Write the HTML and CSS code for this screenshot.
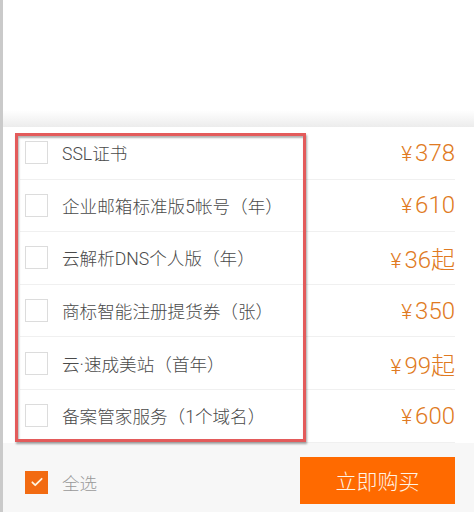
FILE: index.html
```html
<!DOCTYPE html>
<html lang="zh-CN">
<head>
    <meta charset="UTF-8">
    <meta name="viewport" content="width=device-width, initial-scale=1.0">
    <title>增值服务</title>
    <link rel="stylesheet" href="styles.css">
</head>
<body>
    <div class="page">
        <div class="top-panel"></div>
        <div class="panel-shadow"></div>

        <div class="service-list">
            <div class="service-item">
                <span class="check"></span>
                <span class="name">SSL证书</span>
                <span class="price"><span class="yen">¥</span>378</span>
            </div>
            <div class="service-item">
                <span class="check"></span>
                <span class="name">企业邮箱标准版5帐号（年）</span>
                <span class="price"><span class="yen">¥</span>610</span>
            </div>
            <div class="service-item">
                <span class="check"></span>
                <span class="name">云解析DNS个人版（年）</span>
                <span class="price"><span class="yen">¥</span>36起</span>
            </div>
            <div class="service-item">
                <span class="check"></span>
                <span class="name">商标智能注册提货券（张）</span>
                <span class="price"><span class="yen">¥</span>350</span>
            </div>
            <div class="service-item">
                <span class="check"></span>
                <span class="name">云·速成美站（首年）</span>
                <span class="price"><span class="yen">¥</span>99起</span>
            </div>
            <div class="service-item">
                <span class="check"></span>
                <span class="name">备案管家服务（1个域名）</span>
                <span class="price"><span class="yen">¥</span>600</span>
            </div>

            <div class="highlight-box"></div>
        </div>

        <div class="bottom-bar">
            <label class="select-all">
                <span class="check checked">
                    <svg viewBox="0 0 24 24" width="14" height="14">
                        <path d="M4 12.5l5 5L20 6.5" fill="none" stroke="#fff4e0" stroke-width="3" stroke-linecap="round" stroke-linejoin="round"/>
                    </svg>
                </span>
                <span class="select-label">全选</span>
            </label>
            <button class="buy-btn">立即购买</button>
        </div>
    </div>
</body>
</html>
```

FILE: styles.css
```css
* {
    margin: 0;
    padding: 0;
    box-sizing: border-box;
}

body {
    font-family: Roboto, "Noto Sans CJK SC", sans-serif;
    background: #ffffff;
    width: 474px;
    height: 512px;
    overflow: hidden;
}

.page {
    height: 512px;
    border-left: 3px solid #cacaca;
    display: flex;
    flex-direction: column;
}

.top-panel {
    height: 110px;
    background: #ffffff;
}

.panel-shadow {
    height: 17px;
    background: linear-gradient(#ffffff, #ececec);
}

.service-list {
    position: relative;
    padding: 0 19px 0 17px;
}

.service-item {
    display: flex;
    align-items: center;
    height: 52.6px;
    padding-left: 5px;
    border-bottom: 1px solid #f0f0f0;
}

.service-item:last-of-type {
    border-bottom: none;
}

.check {
    width: 23px;
    height: 23px;
    border: 1px solid #dcdcdc;
    background: #ffffff;
    flex-shrink: 0;
    display: flex;
    align-items: center;
    justify-content: center;
}

.check.checked {
    background: #f26b12;
    border-color: #f26b12;
}

.name {
    margin-left: 14px;
    font-size: 17.6px;
    font-weight: 300;
    color: #4a4a4a;
    flex: 1;
}

.price {
    font-size: 24px;
    font-weight: 300;
    color: #e07a22;
}

.yen {
    font-size: 21px;
    margin-right: 3px;
}

.highlight-box {
    position: absolute;
    left: 12px;
    top: 6px;
    width: 291px;
    height: 309px;
    border: 3px solid #e35b5b;
    box-shadow: 1px 2px 2px rgba(0, 0, 0, 0.35), inset 1px 2px 2px rgba(0, 0, 0, 0.3);
    pointer-events: none;
}

.bottom-bar {
    flex: 1;
    background: #f7f7f7;
    display: flex;
    justify-content: space-between;
    align-items: flex-start;
    padding: 14px 19px 0 22px;
}

.select-all {
    display: flex;
    align-items: center;
    margin-top: 13px;
}

.select-label {
    margin-left: 14px;
    font-size: 17.6px;
    font-weight: 300;
    color: #999999;
}

.buy-btn {
    width: 155px;
    height: 47px;
    border: none;
    background: #ff6a00;
    color: #fff4e6;
    font-family: Roboto, "Noto Sans CJK SC", sans-serif;
    font-size: 21px;
    font-weight: 300;
    cursor: pointer;
}
```
